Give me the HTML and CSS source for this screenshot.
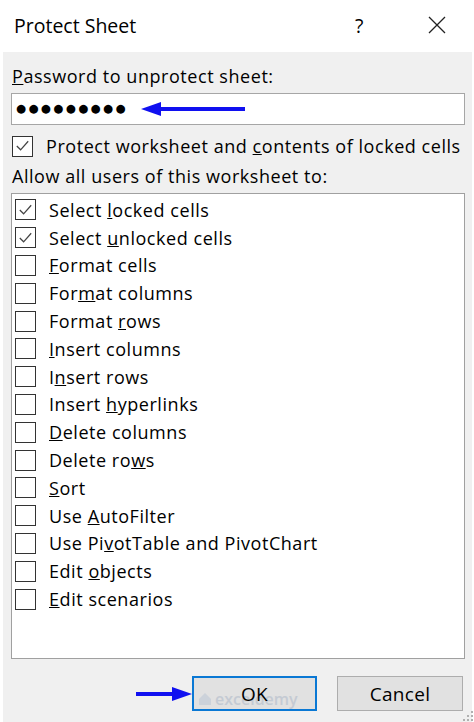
FILE: index.html
```html
<!DOCTYPE html>
<html>
<head>
<meta charset="utf-8">
<link rel="stylesheet" href="styles.css">
</head>
<body>
<div class="dialog">
  <div class="titlebar">
    <div class="title">Protect Sheet</div>
    <div class="help">?</div>
    <div class="close">
      <svg width="18" height="18" viewBox="0 0 18 18"><path d="M1 1 L17 17 M17 1 L1 17" stroke="#222" stroke-width="1.3" fill="none"/></svg>
    </div>
  </div>
  <div class="content">
    <div class="label"><u>P</u>assword to unprotect sheet:</div>
    <div class="input">
      <span class="dots">●●●●●●●●●</span>
      <svg class="arrow-left" width="110" height="20" viewBox="0 0 110 20"><path d="M2 10 L22 3 L22 8 L106 8 L106 12 L22 12 L22 17 Z" fill="#1010f0"/></svg>
    </div>
    <div class="check-row">
      <span class="box"><svg width="20" height="20" viewBox="0 0 20 20"><path d="M4 10 L8 14 L16 5" stroke="#444" stroke-width="1.3" fill="none"/></svg></span>
      <span class="text">Protect worksheet and <u>c</u>ontents of locked cells</span>
    </div>
    <div class="label allow">Allow all users of this worksheet to:</div>
    <div class="list">
      <div class="item"><span class="box"><svg width="20" height="20" viewBox="0 0 20 20"><path d="M4 10 L8 14 L16 5" stroke="#444" stroke-width="1.3" fill="none"/></svg></span><span class="text">Select <u>l</u>ocked cells</span></div>
      <div class="item"><span class="box"><svg width="20" height="20" viewBox="0 0 20 20"><path d="M4 10 L8 14 L16 5" stroke="#444" stroke-width="1.3" fill="none"/></svg></span><span class="text">Select <u>u</u>nlocked cells</span></div>
      <div class="item"><span class="box"></span><span class="text"><u>F</u>ormat cells</span></div>
      <div class="item"><span class="box"></span><span class="text">For<u>m</u>at columns</span></div>
      <div class="item"><span class="box"></span><span class="text">Format <u>r</u>ows</span></div>
      <div class="item"><span class="box"></span><span class="text"><u>I</u>nsert columns</span></div>
      <div class="item"><span class="box"></span><span class="text">I<u>n</u>sert rows</span></div>
      <div class="item"><span class="box"></span><span class="text">Insert <u>h</u>yperlinks</span></div>
      <div class="item"><span class="box"></span><span class="text"><u>D</u>elete columns</span></div>
      <div class="item"><span class="box"></span><span class="text">Delete ro<u>w</u>s</span></div>
      <div class="item"><span class="box"></span><span class="text"><u>S</u>ort</span></div>
      <div class="item"><span class="box"></span><span class="text">Use <u>A</u>utoFilter</span></div>
      <div class="item"><span class="box"></span><span class="text">Use Pi<u>v</u>otTable and PivotChart</span></div>
      <div class="item"><span class="box"></span><span class="text">Edit <u>o</u>bjects</span></div>
      <div class="item"><span class="box"></span><span class="text"><u>E</u>dit scenarios</span></div>
    </div>
    <div class="buttons">
      <svg class="arrow-right" width="60" height="20" viewBox="0 0 60 20"><path d="M58 10 L38 3 L38 8 L2 8 L2 12 L38 12 L38 17 Z" fill="#1010f0"/></svg>
      <div class="btn ok">
        <div class="watermark"><svg width="14" height="14" viewBox="0 0 14 14"><path d="M1 7 L7 1 L13 7 L13 13 L1 13 Z" fill="#b8c4d4"/></svg><span class="wm-text">exceldemy</span></div>
        <span class="btn-label">OK</span>
      </div>
      <div class="btn cancel"><span class="btn-label">Cancel</span></div>
    </div>
    <div class="grip">
      <svg width="12" height="12" viewBox="0 0 12 12" fill="#b0b0b0"><rect x="9" y="1" width="2" height="2"/><rect x="5" y="5" width="2" height="2"/><rect x="9" y="5" width="2" height="2"/><rect x="1" y="9" width="2" height="2"/><rect x="5" y="9" width="2" height="2"/><rect x="9" y="9" width="2" height="2"/></svg>
    </div>
  </div>
</div>
</body>
</html>
```
FILE: styles.css
```css
html, body {
  margin: 0;
  padding: 0;
  background: #ffffff;
}
body {
  font-family: "Open Sans", "Noto Sans", sans-serif;
  color: #000;
}
.dialog {
  width: 474px;
  height: 722px;
  display: flex;
  flex-direction: column;
  overflow: hidden;
}
.titlebar {
  height: 52px;
  display: flex;
  align-items: center;
  background: #fff;
  flex: none;
}
.title {
  font-size: 19.5px;
  padding-left: 14px;
  flex: 1;
  padding-bottom: 2px;
}
.help {
  font-size: 19.5px;
  width: 16px;
  margin-right: 57px;
  padding-bottom: 2px;
}
.close {
  width: 18px;
  height: 18px;
  margin-right: 28px;
  margin-bottom: 2px;
}
.close svg { display: block; }
.content {
  position: relative;
  flex: 1;
  margin-left: 3px;
  width: 469px;
  background: #f0f0f0;
  padding: 12px 7px 0 8px;
  box-sizing: border-box;
  font-size: 18px;
  letter-spacing: 0.55px;
}
.label {
  height: 24px;
  line-height: 24px;
  padding-left: 1px;
  white-space: nowrap;
}
.input {
  position: relative;
  margin-top: 5px;
  height: 32px;
  box-sizing: border-box;
  border: 1px solid #a6a6a6;
  background: #fff;
  display: flex;
  align-items: center;
  padding-left: 4px;
}
.dots {
  font-family: "DejaVu Sans", sans-serif;
  font-size: 11.5px;
  letter-spacing: 2.4px;
  line-height: 1;
}
.arrow-left {
  position: absolute;
  left: 127px;
  top: 5px;
}
.check-row {
  margin-top: 6px;
  height: 30px;
  display: flex;
  align-items: center;
  margin-left: 1px;
}
.box {
  width: 21px;
  height: 21px;
  box-sizing: border-box;
  border: 1px solid #333;
  background: #fff;
  flex: none;
  display: flex;
  align-items: center;
  justify-content: center;
}
.box svg { display: block; }
.check-row .text { margin-left: 13px; white-space: nowrap; }
.allow {
  margin-top: 3px;
}
.list {
  margin-top: 5px;
  height: 466px;
  box-sizing: border-box;
  border: 1px solid #a0a0a0;
  background: #fff;
  padding: 2px 0 0 3px;
}
.item {
  height: 27.8px;
  display: flex;
  align-items: center;
}
.item .text { margin-left: 13px; white-space: nowrap; }
.buttons {
  margin-top: 17px;
  height: 35px;
  display: flex;
  justify-content: flex-end;
  align-items: center;
  gap: 20px;
  padding-right: 2px;
}
.arrow-right {
  margin-right: -22px;
}
.btn {
  position: relative;
  height: 35px;
  box-sizing: border-box;
  background: #e1e1e1;
  display: flex;
  align-items: center;
  justify-content: center;
  font-size: 19px;
  letter-spacing: 0.3px;
}
.btn-label { position: relative; }
.ok {
  width: 125px;
  border: 2px solid #0a78d4;
}
.cancel {
  width: 126px;
  border: 1px solid #adadad;
}
.watermark {
  position: absolute;
  left: 4px;
  top: 13px;
  display: flex;
  align-items: center;
  gap: 3px;
  opacity: 0.5;
  letter-spacing: 0;
}
.wm-text {
  font-size: 16px;
  line-height: 16px;
  color: #a9b5c7;
  font-weight: 600;
}
.grip {
  position: absolute;
  right: -2px;
  bottom: 0px;
}
.grip svg { display: block; }
```
